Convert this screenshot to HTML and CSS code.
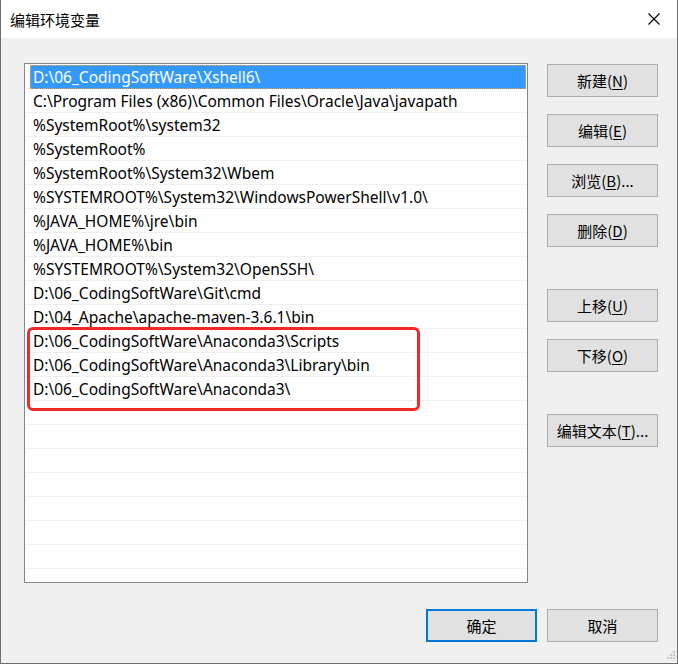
FILE: index.html
```html
<!DOCTYPE html>
<html>
<head>
    <meta charset="utf-8">
    <title>编辑环境变量</title>
    <link rel="stylesheet" href="styles.css">
</head>
<body>
    <div class="window">
        <div class="titlebar">
            <span class="title">编辑环境变量</span>
            <span class="close">
                <svg width="12" height="12" viewBox="0 0 12 12"><path d="M0.5 0.5 L11.5 11.5 M11.5 0.5 L0.5 11.5" stroke="#000" stroke-width="1.1" fill="none"/></svg>
            </span>
        </div>
        <div class="body">
            <div class="main">
                <div class="list">
                    <div class="row"><div class="sel">D:\06_CodingSoftWare\Xshell6\</div></div>
                    <div class="row">C:\Program Files (x86)\Common Files\Oracle\Java\javapath</div>
                    <div class="row">%SystemRoot%\system32</div>
                    <div class="row">%SystemRoot%</div>
                    <div class="row">%SystemRoot%\System32\Wbem</div>
                    <div class="row">%SYSTEMROOT%\System32\WindowsPowerShell\v1.0\</div>
                    <div class="row">%JAVA_HOME%\jre\bin</div>
                    <div class="row">%JAVA_HOME%\bin</div>
                    <div class="row">%SYSTEMROOT%\System32\OpenSSH\</div>
                    <div class="row">D:\06_CodingSoftWare\Git\cmd</div>
                    <div class="row">D:\04_Apache\apache-maven-3.6.1\bin</div>
                    <div class="row">D:\06_CodingSoftWare\Anaconda3\Scripts</div>
                    <div class="row">D:\06_CodingSoftWare\Anaconda3\Library\bin</div>
                    <div class="row">D:\06_CodingSoftWare\Anaconda3\</div>
                    <div class="row"></div>
                    <div class="row"></div>
                    <div class="row"></div>
                    <div class="row"></div>
                    <div class="row"></div>
                    <div class="row"></div>
                    <div class="row"></div>
                    <div class="row"></div>
                </div>
                <div class="side">
                    <div class="btn">新建(<u>N</u>)</div>
                    <div class="btn">编辑(<u>E</u>)</div>
                    <div class="btn">浏览(<u>B</u>)...</div>
                    <div class="btn">删除(<u>D</u>)</div>
                    <div class="btn far">上移(<u>U</u>)</div>
                    <div class="btn">下移(<u>O</u>)</div>
                    <div class="btn far">编辑文本(<u>T</u>)...</div>
                </div>
            </div>
            <div class="footer">
                <div class="btn default">确定</div>
                <div class="btn">取消</div>
            </div>
        </div>
        <svg class="grip" width="10" height="10" viewBox="0 0 10 10">
            <rect x="8" y="0" width="2" height="2" fill="#c4c4c4"/>
            <rect x="5" y="3" width="2" height="2" fill="#c4c4c4"/>
            <rect x="8" y="3" width="2" height="2" fill="#c4c4c4"/>
            <rect x="2" y="6" width="2" height="2" fill="#c4c4c4"/>
            <rect x="5" y="6" width="2" height="2" fill="#c4c4c4"/>
            <rect x="8" y="6" width="2" height="2" fill="#c4c4c4"/>
        </svg>
        <div class="mark"></div>
    </div>
</body>
</html>
```

FILE: styles.css
```css
*{
    padding: 0;
    margin: 0;
    box-sizing: border-box;
}
body{
    font-family: "Noto Sans", "Noto Sans CJK SC", sans-serif;
    font-size: 15px;
    color: #000;
    background: #fff;
}
.window{
    position: relative;
    width: 678px;
    height: 664px;
    background: #f0f0f0;
    border: 1px solid #6f6f6f;
    border-top: none;
    overflow: hidden;
}
.titlebar{
    height: 38px;
    background: #fff;
    display: flex;
    justify-content: space-between;
    align-items: center;
    padding-left: 9px;
}
.title{
    font-family: "Noto Sans CJK SC", sans-serif;
    font-size: 15px;
}
.close{
    width: 46px;
    height: 38px;
    display: flex;
    align-items: center;
    justify-content: center;
}
.body{
    padding: 25px 19px 0 23px;
}
.main{
    display: flex;
    gap: 19px;
}
.list{
    width: 504px;
    height: 520px;
    background: #fff;
    border: 1px solid #828790;
    padding: 2px 0 0 1px;
    overflow: hidden;
    font-size: 15.5px;
}
.row{
    height: 24px;
    padding-top: 2px;
    line-height: 21px;
    border-bottom: 1px solid #f0f0f0;
    padding-left: 7px;
    white-space: nowrap;
}
.row:first-child{
    padding: 0;
}
.sel{
    margin: -1px 1px 0 4px;
    height: 24px;
    padding-top: 2px;
    line-height: 21px;
    padding-left: 3px;
    background: #3399ff;
    color: #fff;
    outline: 1px dotted #f0a040;
    outline-offset: -1px;
}
.side{
    display: flex;
    flex-direction: column;
    gap: 17px;
    padding-top: 1px;
}
.btn{
    width: 111px;
    height: 33px;
    background: #e1e1e1;
    border: 1px solid #adadad;
    display: flex;
    align-items: center;
    justify-content: center;
    font-family: "Noto Sans CJK SC", sans-serif;
    font-size: 15px;
    white-space: nowrap;
}
.btn u{
    text-underline-offset: 2px;
}
.side .far{
    margin-top: 25px;
}
.footer{
    display: flex;
    justify-content: flex-end;
    gap: 10px;
    margin-top: 26px;
}
.btn.default{
    border: 2px solid #0078d7;
}
.grip{
    position: absolute;
    right: 2px;
    bottom: 2px;
}
.mark{
    position: absolute;
    left: 26px;
    top: 327px;
    width: 393px;
    height: 84px;
    border: 3px solid #f02828;
    border-radius: 6px;
}
```
